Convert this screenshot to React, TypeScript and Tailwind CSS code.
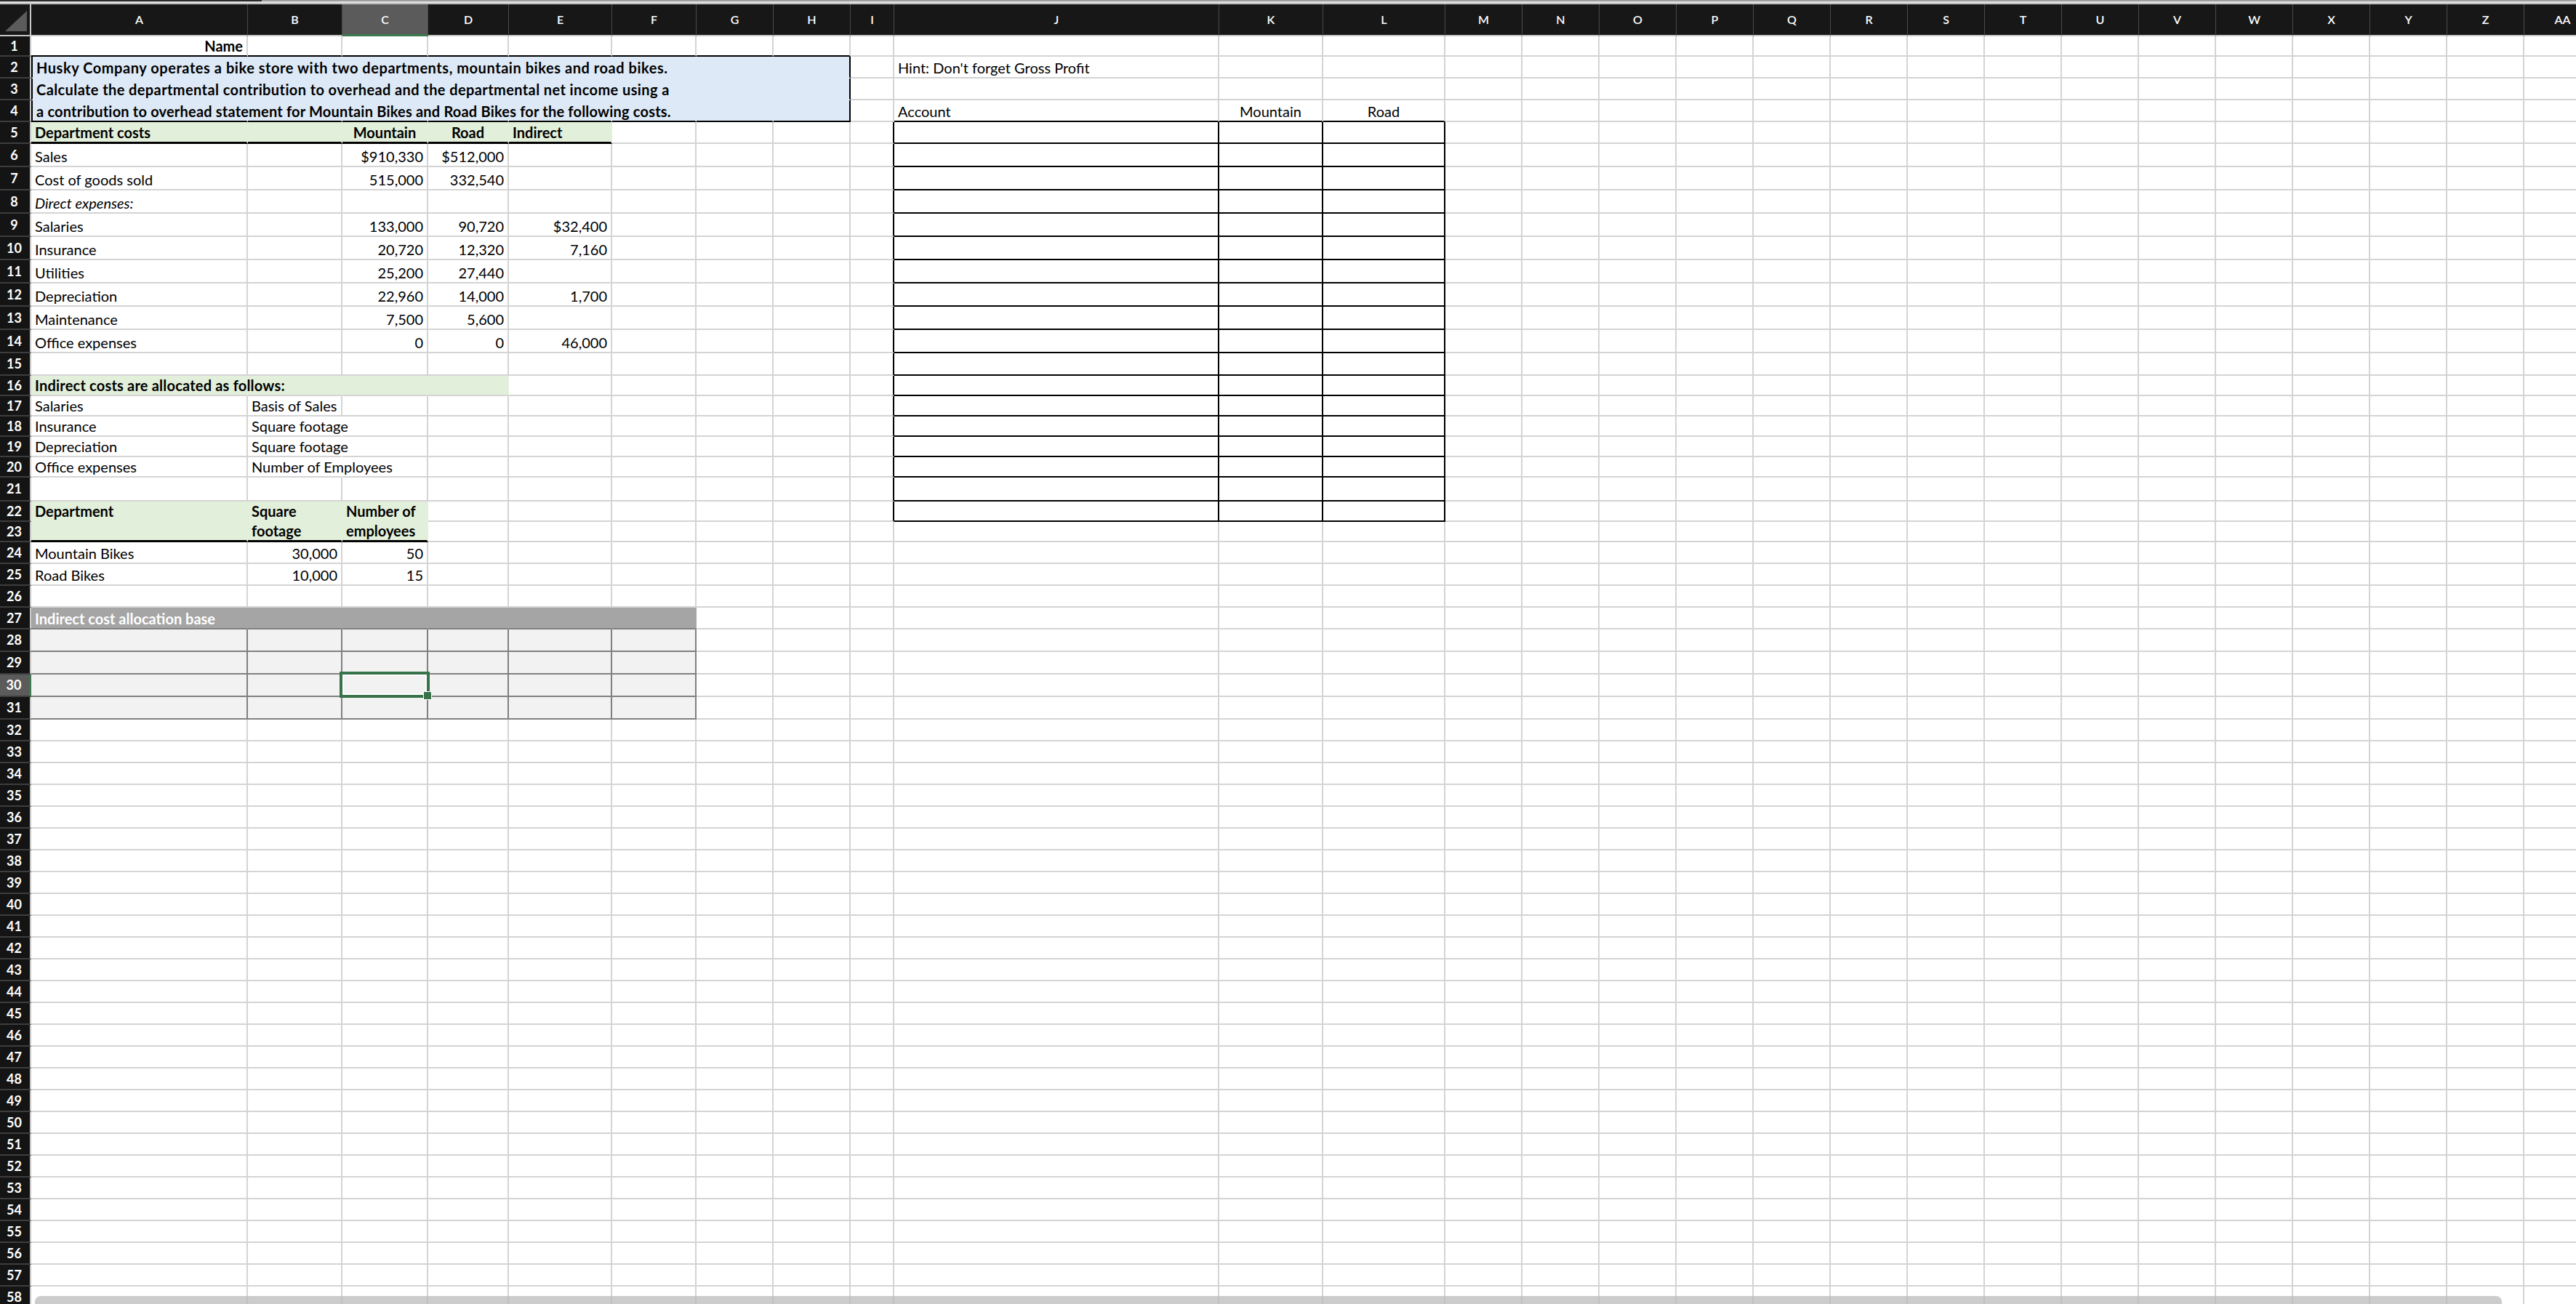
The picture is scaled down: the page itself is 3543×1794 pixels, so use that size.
import { twMerge } from 'tailwind-merge';

const LETTERS = ['A', 'B', 'C', 'D', 'E', 'F', 'G', 'H', 'I', 'J', 'K', 'L', 'M', 'N', 'O', 'P', 'Q', 'R', 'S', 'T', 'U', 'V', 'W', 'X', 'Y', 'Z', 'AA'];

const WIDTH: Record<string, string> = {
  A: 'w-[298px]',
  B: 'w-[130px]',
  C: 'w-[118px]',
  D: 'w-[111px]',
  E: 'w-[142px]',
  F: 'w-[116px]',
  G: 'w-[106px]',
  H: 'w-[106px]',
  I: 'w-[60px]',
  J: 'w-[447px]',
  K: 'w-[143px]',
  L: 'w-[168px]',
};

const R = 'justify-end';
const CEN = 'justify-center';

// cell text + per-cell formatting
const TEXT: Record<string, [string, string?]> = {
  A1: ['Name', 'font-bold justify-end'],
  A2: ['Husky Company operates a bike store with two departments, mountain bikes and road bikes.', 'font-bold z-[1] tracking-[0.55px]'],
  A3: ['Calculate the departmental contribution to overhead and the departmental net income using a', 'font-bold z-[1] tracking-[0.4px]'],
  A4: ['a contribution to overhead statement for Mountain Bikes and Road Bikes for the following costs.', 'font-bold z-[1] tracking-[0.2px]'],
  A5: ['Department costs', 'font-bold'],
  C5: ['Mountain', `font-bold ${CEN}`],
  D5: ['Road', `font-bold ${CEN}`],
  E5: ['Indirect', 'font-bold'],
  A6: ['Sales'], C6: ['$910,330', R], D6: ['$512,000', R],
  A7: ['Cost of goods sold'], C7: ['515,000', R], D7: ['332,540', R],
  A8: ['Direct expenses:', 'italic'],
  A9: ['Salaries'], C9: ['133,000', R], D9: ['90,720', R], E9: ['$32,400', R],
  A10: ['Insurance'], C10: ['20,720', R], D10: ['12,320', R], E10: ['7,160', R],
  A11: ['Utilities'], C11: ['25,200', R], D11: ['27,440', R],
  A12: ['Depreciation'], C12: ['22,960', R], D12: ['14,000', R], E12: ['1,700', R],
  A13: ['Maintenance'], C13: ['7,500', R], D13: ['5,600', R],
  A14: ['Office expenses'], C14: ['0', R], D14: ['0', R], E14: ['46,000', R],
  A16: ['Indirect costs are allocated as follows:', 'font-bold z-[1] tracking-[0.2px]'],
  A17: ['Salaries'], B17: ['Basis of Sales'],
  A18: ['Insurance'], B18: ['Square footage'],
  A19: ['Depreciation'], B19: ['Square footage'],
  A20: ['Office expenses'], B20: ['Number of Employees'],
  A22: ['Department', 'font-bold'], B22: ['Square', 'font-bold'], C22: ['Number of', 'font-bold'],
  B23: ['footage', 'font-bold'], C23: ['employees', 'font-bold'],
  A24: ['Mountain Bikes'], B24: ['30,000', R], C24: ['50', R],
  A25: ['Road Bikes'], B25: ['10,000', R], C25: ['15', R],
  A27: ['Indirect cost allocation base', 'font-bold'],
  J2: ["Hint: Don't forget Gross Profit"],
  J4: ['Account'], K4: ['Mountain', CEN], L4: ['Road', CEN],
};

function rowHeight(r: number) {
  if (r === 1) return 'h-[28px]';
  if (r <= 5) return 'h-[30px]';
  if (r <= 14) return 'h-[32px]';
  if (r === 15) return 'h-[31px]';
  if (r <= 20) return 'h-[28px]';
  if (r === 21) return 'h-[33px]';
  if (r <= 23) return 'h-[28px]';
  if (r <= 27) return 'h-[30px]';
  if (r <= 31) return 'h-[31px]';
  return 'h-[30px]';
}

function fill(col: string, r: number) {
  const i = LETTERS.indexOf(col);
  const c: string[] = [];
  if (r === 1 && i <= 7) c.push('border-b-black');
  if (r >= 2 && r <= 4 && i <= 7) {
    c.push('bg-[#dde9f6] border-r-[#dde9f6] border-b-[#dde9f6]');
    if (i === 0) c.push('border-l-2 border-l-black');
    if (i === 7) c.push('border-r-black');
    if (r === 4) c.push('border-b-black');
  }
  if (r === 5 && i <= 4) c.push('bg-[#e2efda] border-r-[#e2efda] border-b-[3px] border-b-black');
  if (r === 16 && i <= 3) c.push('bg-[#e2efda] border-r-[#e2efda]');
  if ((r === 22 || r === 23) && i <= 2) {
    c.push('bg-[#e2efda] border-r-[#e2efda]');
    c.push(r === 22 ? 'border-b-[#e2efda]' : 'border-b-[3px] border-b-black');
  }
  if (r === 27 && i <= 5) c.push('bg-[#a5a5a5] border-r-[#a5a5a5] border-b-[#808080] text-white');
  if (r >= 28 && r <= 31 && i <= 5) c.push('bg-[#f2f2f2] border-r-[#808080] border-b-[#808080]');
  // answer table J:L
  if (r === 4 && i >= 9 && i <= 11) c.push('border-b-black');
  if (r >= 5 && r <= 22 && i === 8) c.push('border-r-black');
  if (r >= 5 && r <= 22 && i >= 9 && i <= 11) c.push('border-r-black border-b-black');
  // text spilling from B into C hides the gridline
  if (r >= 18 && r <= 20 && i === 1) c.push('border-r-white z-[1]');
  return c.join(' ');
}

const CELL =
  'relative shrink-0 h-full flex items-end pb-[2px] px-[5px] whitespace-nowrap text-[20px] leading-[22px] text-black border-r-2 border-b-2 border-r-[#d4d4d4] border-b-[#d4d4d4]';

function Selection() {
  return (
    <div className="absolute -left-[4px] -top-[4px] w-[124px] h-[36px] border-4 border-[#38724a] z-[2]">
      <div className="w-full h-full border-2 border-white" />
      <div className="absolute -right-[7px] -bottom-[7px] w-[12px] h-[12px] bg-[#38724a] border border-white" />
    </div>
  );
}

function RowHead({ n }: { n: number }) {
  return (
    <div
      className={twMerge(
        'shrink-0 w-[43px] h-full flex items-center justify-center pr-[2px] bg-[#141414] text-white text-[18px] font-bold border-r-2 border-r-[#c8c8c8] border-b-2 border-b-[#3d3d3d]',
        n === 30 && 'bg-[#5b5b5b] border-r-[3px] border-r-[#3a7a4f]'
      )}
    >
      {n}
    </div>
  );
}

function HeaderRow() {
  return (
    <div className="flex h-[44px]">
      <div className="shrink-0 w-[43px] h-full bg-[#171717] border-r-2 border-r-[#c8c8c8] border-b-2 border-b-[#c8c8c8]">
        <svg width="41" height="42" viewBox="0 0 41 42">
          <polygon points="7,37 37,37 37,9" fill="#5b5b5b" />
        </svg>
      </div>
      {LETTERS.map((col) => (
        <div
          key={col}
          className={twMerge(
            'shrink-0 h-full flex items-center justify-center bg-[#171717] text-white text-[16px] font-semibold border-r border-r-[#4a4a4a] border-b-2 border-b-[#c8c8c8]',
            WIDTH[col] ?? 'w-[106px]',
            col === 'C' && 'bg-[#5b5b5b] border-b-[3px] border-b-[#3a7a4f]'
          )}
        >
          {col}
        </div>
      ))}
    </div>
  );
}

export default function App() {
  const rows = Array.from({ length: 58 }, (_, k) => k + 1);

  return (
    <div className="relative w-[3543px] h-[1794px] overflow-hidden bg-white font-[Lato,'Liberation_Sans',sans-serif]">
      {/* window edge above the sheet */}
      <div className="flex h-[2px]">
        <div className="w-[360px] bg-[#2b2b2b]" />
        <div className="flex-1 bg-[#9e9e9e]" />
      </div>
      <div className="h-[2px] bg-[#e4e4e4]" />
      <div className="h-[2px] bg-[#bdbdbd]" />

      <HeaderRow />

      {rows.map((r) => (
        <div key={r} className={twMerge('flex', rowHeight(r))}>
          <RowHead n={r} />
          {LETTERS.map((col) => {
            const t = TEXT[col + r];
            return (
              <div key={col} className={twMerge(CELL, WIDTH[col] ?? 'w-[106px]', fill(col, r), t?.[1])}>
                {t?.[0]}
                {col === 'C' && r === 30 && <Selection />}
              </div>
            );
          })}
        </div>
      ))}

      {/* horizontal scrollbar */}
      <div className="absolute left-[48px] bottom-0 w-[3393px] h-[11px] rounded-t-[8px] bg-[#bbbbbb]/75" />
    </div>
  );
}
